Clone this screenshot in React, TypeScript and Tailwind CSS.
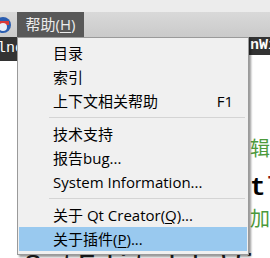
const items: (string | null)[] = [
  "目录",
  "索引",
  "上下文相关帮助",
  null,
  "技术支持",
  "报告bug...",
  "System Information...",
  null,
  "about-qt",
  "about-plugins",
]

function Label({ id }: { id: string }) {
  if (id === "about-qt")
    return (
      <span>
        关于 Qt Creator(<span className="underline underline-offset-2">Q</span>)...
      </span>
    )
  if (id === "about-plugins")
    return (
      <span>
        关于插件(<span className="underline underline-offset-2">P</span>)...
      </span>
    )
  return <span>{id}</span>
}

export default function App() {
  return (
    <div
      className="relative w-[270px] h-[258px] overflow-hidden bg-white"
      style={{ fontFamily: '"Open Sans", "Noto Sans CJK SC", sans-serif' }}
    >
      {/* window top + menu bar */}
      <div className="h-[12px] bg-[#ececec]" />
      <div className="h-[25px] flex bg-gradient-to-b from-[#d9d9d9] to-[#cacaca]">
        <div className="w-[17px] flex items-center overflow-hidden">
          <svg width="17" height="20" viewBox="0 0 17 20" className="-ml-[6px]">
            <circle cx="9" cy="10" r="8" fill="#2a5db0" />
            <path d="M3 6 L15 6 L15 10 L3 10 Z" fill="#d8393a" />
            <circle cx="9" cy="12" r="4" fill="#e8eef8" />
          </svg>
        </div>
        <div className="w-[67px] bg-[#585858] text-[#ececec] text-[15px] flex items-center justify-center">
          帮助(<span className="underline underline-offset-2">H</span>)
        </div>
      </div>

      {/* editor behind the menu */}
      <div className="flex h-[221px]" style={{ fontFamily: '"Liberation Mono", "Noto Sans CJK SC", monospace' }}>
        <div className="w-[17px]">
          <div className="h-[24px] bg-[#333333] text-white text-[15px] leading-[24px] -ml-[3px] overflow-hidden whitespace-nowrap">
            lnc
          </div>
        </div>
        <div className="flex-1" />
        <div className="w-[21px] flex flex-col overflow-hidden whitespace-nowrap">
          <div className="h-[18px] bg-[#333333] text-white text-[15px] font-bold leading-[18px] pl-[1px]">nWi</div>
          <div className="mt-[84px] text-[#4c9a3c] text-[20px] leading-[24px] pl-[1px]">辑</div>
          <div className="mt-[12px] text-[26px] font-bold leading-[26px] pl-[1px]">
            t<span className="text-[#8b1a1a]">l</span>
          </div>
          <div className="mt-[8px] text-[#4c9a3c] text-[20px] leading-[24px] pl-[1px]">加</div>
        </div>
      </div>
      <div
        className="pl-[24px] text-[30px] leading-[30px] text-[#222] whitespace-nowrap -mt-[6px]"
        style={{ fontFamily: '"Liberation Mono", monospace' }}
      >
        SetEditableWidget
      </div>

      {/* dropdown menu */}
      <div className="absolute left-[17px] top-[37px] w-[232px] bg-[#f0f0f0] border border-[#9a9a9a] py-[3px] px-[1px] shadow-[2px_2px_2px_rgba(0,0,0,0.4)] text-[15px] text-black">
        {items.map((it, i) =>
          it === null ? (
            <div key={i} className="h-[9px] flex items-center pl-[30px] pr-[2px]">
              <div className="h-px w-full bg-[#d4d4d4]" />
            </div>
          ) : (
            <div
              key={i}
              className={
                "h-6 flex items-center pl-[34px] pr-[14px] " +
                (it === "about-plugins" ? "bg-[#99c9ef]" : "")
              }
            >
              <Label id={it} />
              {it === "上下文相关帮助" && <span className="ml-auto">F1</span>}
            </div>
          )
        )}
      </div>
    </div>
  )
}
